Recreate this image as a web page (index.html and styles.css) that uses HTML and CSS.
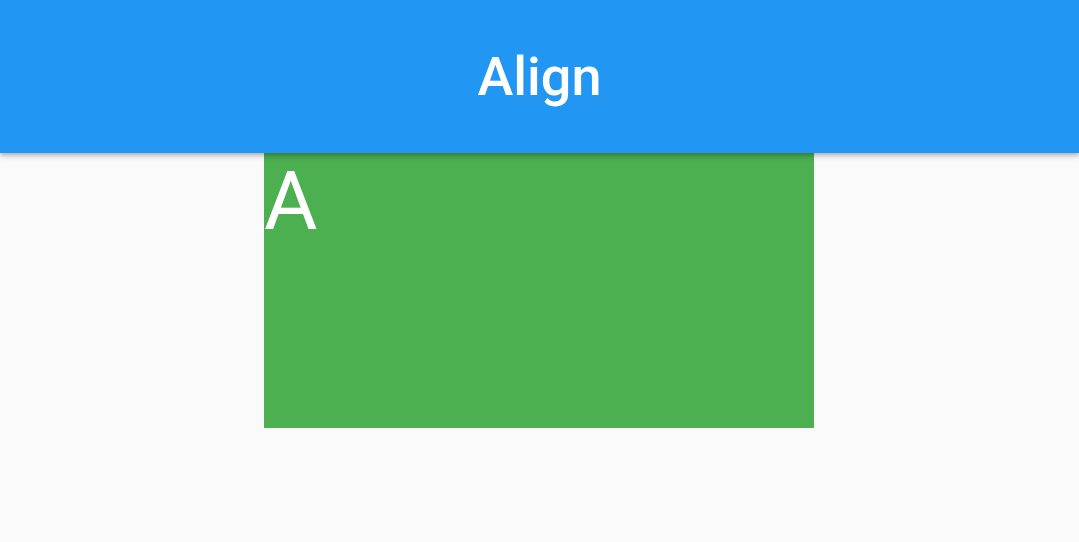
FILE: index.html
```html
<!DOCTYPE html>
<html>
<head>
<meta charset="utf-8">
<link rel="stylesheet" href="styles.css">
</head>
<body>
<header class="appbar"><h1 class="title">Align</h1></header>
<main class="content">
  <div class="box"><span class="letter">A</span></div>
</main>
</body>
</html>
```
FILE: styles.css
```css
html, body { margin: 0; padding: 0; }
body {
  background: #fafafa;
  font-family: Roboto, "Liberation Sans", sans-serif;
  width: 1079px;
  height: 542px;
  overflow: hidden;
}
.appbar {
  position: relative;
  z-index: 1;
  height: 153px;
  background: #2196f3;
  display: flex;
  align-items: center;
  justify-content: center;
  box-shadow: 0 2px 4px rgba(0,0,0,0.2), 0 4px 6px rgba(0,0,0,0.12);
}
.title {
  margin: 0;
  color: #fff;
  font-size: 54px;
  font-weight: 500;
  line-height: 1;
}
.content {
  display: flex;
  justify-content: center;
}
.box {
  width: 550px;
  height: 275px;
  background: #4caf50;
  margin-left: -1px;
}
.letter {
  display: block;
  color: #fff;
  font-size: 82px;
  font-weight: 400;
  line-height: normal;
}
```
